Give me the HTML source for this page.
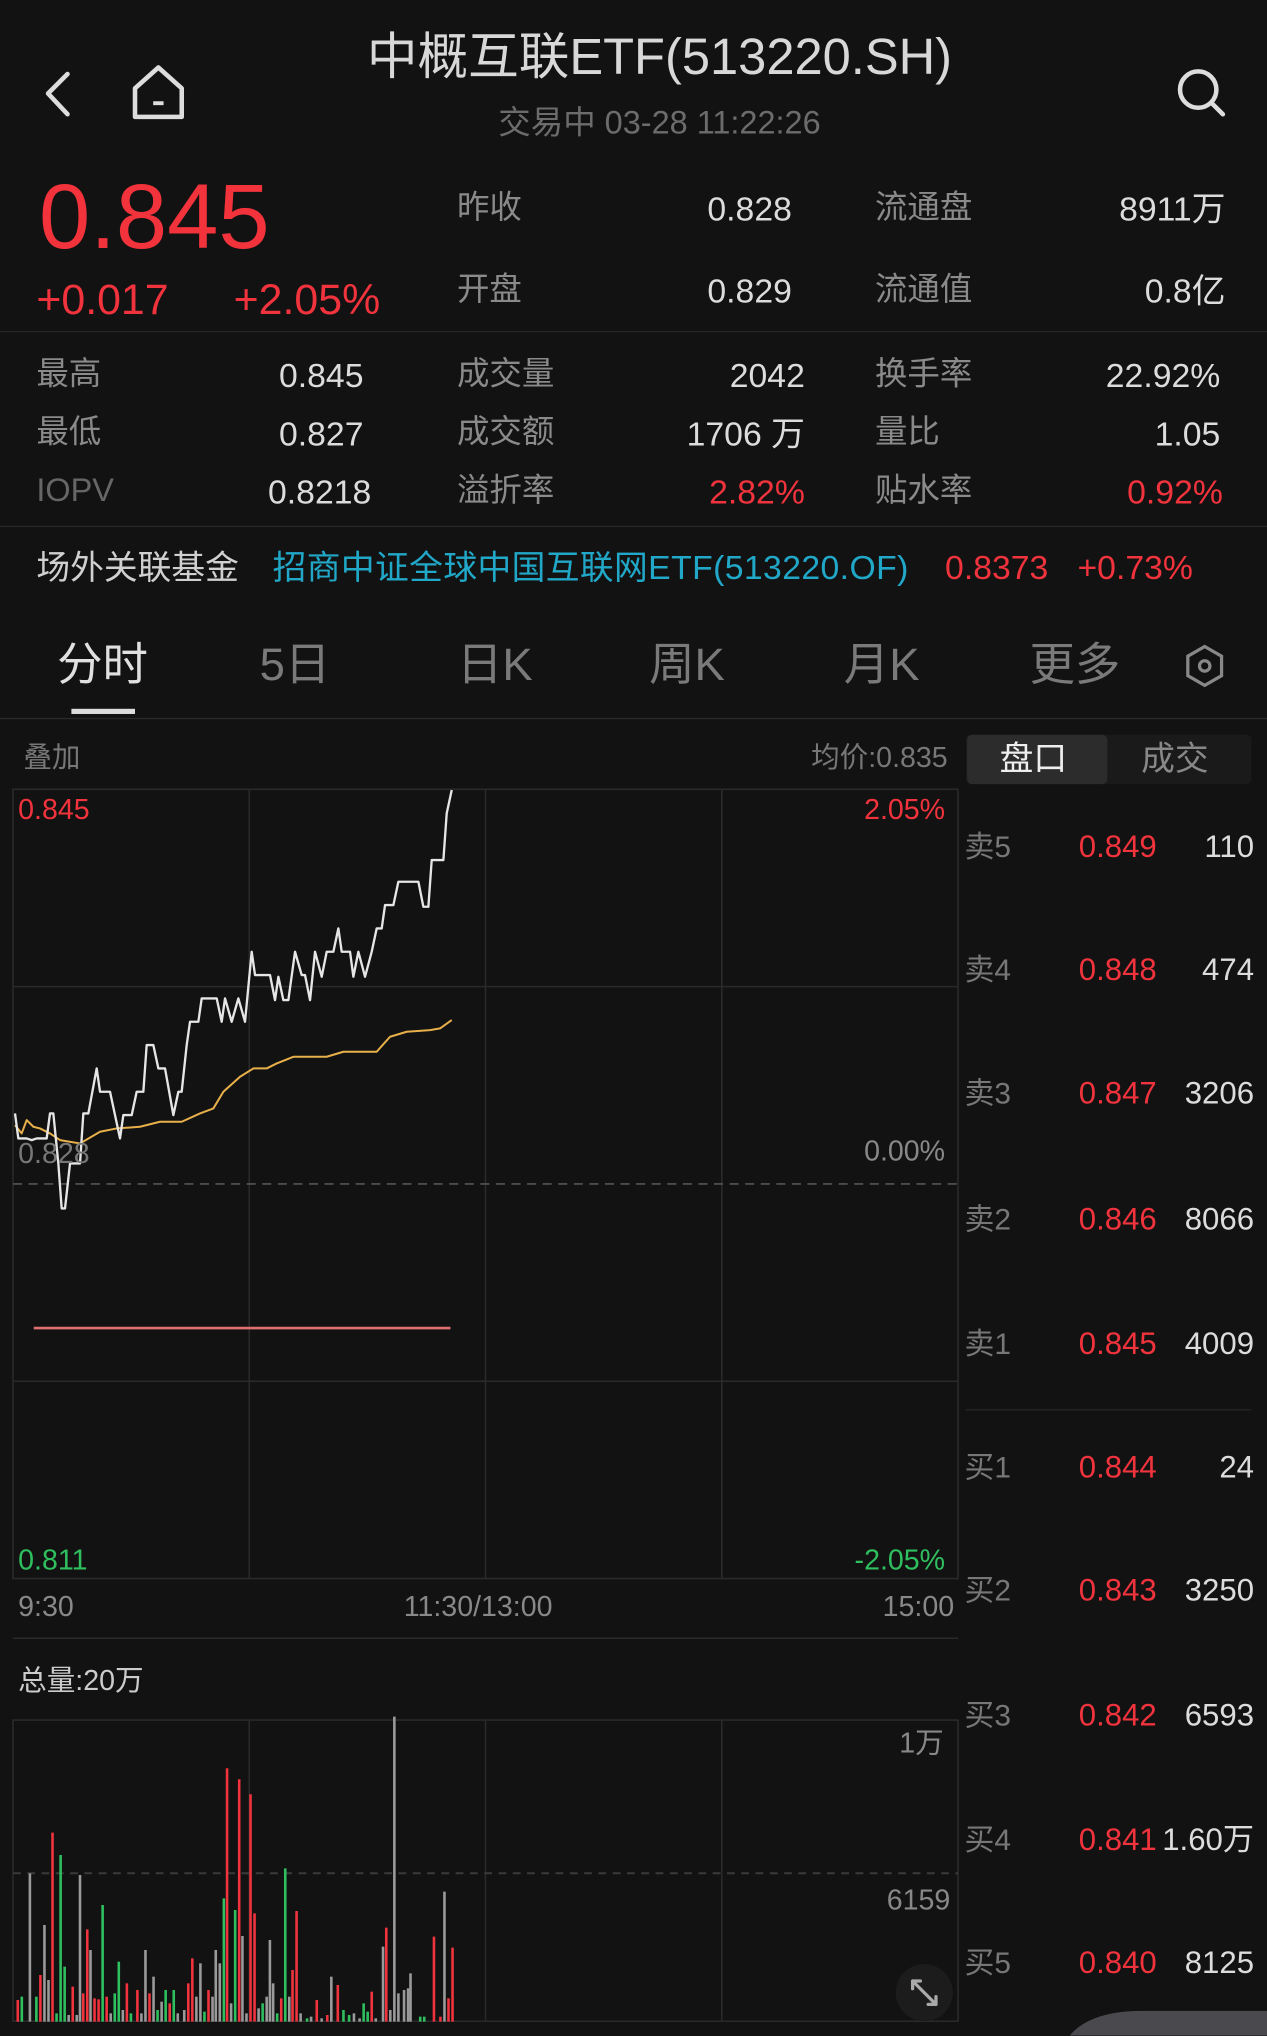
<!DOCTYPE html>
<html><head><meta charset="utf-8"><style>
html,body{margin:0;padding:0;background:#121212;width:1267px;height:2036px;overflow:hidden}
#w{position:absolute;left:0;top:0;width:976px;height:1568px;transform:scale(1.29816);transform-origin:0 0;background:#121212;font-family:"Liberation Sans","Noto Sans CJK SC",sans-serif}
.t{position:absolute;white-space:nowrap;line-height:1}
.r{text-align:right}
.g{color:#8a8a8a}.w{color:#dcdcdc}.red{color:#f0333c}.gn{color:#2fbf5e}
.hl{position:absolute;height:1px;background:#262626}
</style></head><body><div id="w">
<svg style="position:absolute;left:0;top:0" width="976" height="120">
<path d="M52 57 L37 72 L52 88" fill="none" stroke="#ddd" stroke-width="3.5" stroke-linecap="round" stroke-linejoin="round"/>
<path d="M104 90 V68 L122 52 L140 68 V90 Z" fill="none" stroke="#ddd" stroke-width="3.5" stroke-linejoin="round"/>
<rect x="118" y="78" width="8" height="3" fill="#ddd"/>
<circle cx="923" cy="69" r="14" fill="none" stroke="#ddd" stroke-width="3.5"/>
<path d="M933 79 L942 88" stroke="#ddd" stroke-width="3.5" stroke-linecap="round"/>
</svg>
<div class="t w" style="left:0;width:1016px;text-align:center;top:25px;font-size:39px;color:#d8d8d8">中概互联ETF(513220.SH)</div>
<div class="t" style="left:0;width:1016px;text-align:center;top:83px;font-size:25px;color:#6c6c6c">交易中 03-28 11:22:26</div>

<div class="t red" style="left:30px;top:132px;font-size:71px;color:#f2333c">0.845</div>
<div class="t red" style="left:28px;top:214px;font-size:33px">+0.017</div>
<div class="t red" style="left:180px;top:214px;font-size:33px">+2.05%</div>
<div class="t g" style="left:352px;top:148px;font-size:25px">昨收</div>
<div class="t w r" style="right:366px;top:148px;font-size:26px">0.828</div>
<div class="t g" style="left:674px;top:148px;font-size:25px">流通盘</div>
<div class="t w r" style="right:32px;top:148px;font-size:26px">8911万</div>
<div class="t g" style="left:352px;top:211px;font-size:25px">开盘</div>
<div class="t w r" style="right:366px;top:211px;font-size:26px">0.829</div>
<div class="t g" style="left:674px;top:211px;font-size:25px">流通值</div>
<div class="t w r" style="right:32px;top:211px;font-size:26px">0.8亿</div>
<div class="hl" style="left:0;width:976px;top:255px"></div>

<div class="t g" style="left:28px;top:276px;font-size:25px">最高</div>
<div class="t w r" style="right:696px;top:276px;font-size:26px">0.845</div>
<div class="t g" style="left:352px;top:276px;font-size:25px">成交量</div>
<div class="t w r" style="right:356px;top:276px;font-size:26px">2042</div>
<div class="t g" style="left:674px;top:276px;font-size:25px">换手率</div>
<div class="t w r" style="right:36px;top:276px;font-size:26px">22.92%</div>
<div class="t g" style="left:28px;top:321px;font-size:25px">最低</div>
<div class="t w r" style="right:696px;top:321px;font-size:26px">0.827</div>
<div class="t g" style="left:352px;top:321px;font-size:25px">成交额</div>
<div class="t w r" style="right:356px;top:321px;font-size:26px">1706 万</div>
<div class="t g" style="left:674px;top:321px;font-size:25px">量比</div>
<div class="t w r" style="right:36px;top:321px;font-size:26px">1.05</div>
<div class="t g" style="left:28px;top:366px;font-size:25px;color:#666">IOPV</div>
<div class="t w r" style="right:690px;top:366px;font-size:26px">0.8218</div>
<div class="t g" style="left:352px;top:366px;font-size:25px">溢折率</div>
<div class="t red r" style="right:356px;top:366px;font-size:26px">2.82%</div>
<div class="t g" style="left:674px;top:366px;font-size:25px">贴水率</div>
<div class="t red r" style="right:34px;top:366px;font-size:26px">0.92%</div>
<div class="hl" style="left:0;width:976px;top:405px"></div>

<div class="t" style="left:28px;top:424px;font-size:26px;color:#d0d0d0">场外关联基金</div>
<div class="t" style="left:210px;top:424px;font-size:26px;color:#21a8c8;letter-spacing:0.3px">招商中证全球中国互联网ETF(513220.OF)</div>
<div class="t red" style="left:728px;top:424px;font-size:26px">0.8373</div>
<div class="t red" style="left:830px;top:424px;font-size:26px">+0.73%</div>

<div class="t" style="left:44px;top:495px;font-size:35px;color:#e0e0e0">分时</div>
<div style="position:absolute;left:55px;top:546px;width:49px;height:4px;background:#ddd"></div>
<div class="t g" style="left:200px;top:495px;font-size:35px;color:#7a7a7a">5日</div>
<div class="t g" style="left:352px;top:495px;font-size:35px;color:#7a7a7a">日K</div>
<div class="t g" style="left:500px;top:495px;font-size:35px;color:#7a7a7a">周K</div>
<div class="t g" style="left:650px;top:495px;font-size:35px;color:#7a7a7a">月K</div>
<div class="t g" style="left:793px;top:495px;font-size:35px;color:#7a7a7a">更多</div>
<svg style="position:absolute;left:910px;top:495px" width="36" height="36"><path d="M18 3 L31 10.5 V25.5 L18 33 L5 25.5 V10.5 Z" fill="none" stroke="#888" stroke-width="2.5"/><circle cx="18" cy="18" r="4" fill="none" stroke="#888" stroke-width="2.5"/></svg>
<div class="hl" style="left:0;width:976px;top:553px;background:#2a2a2a"></div>

<div class="t g" style="left:18px;top:573px;font-size:22px;color:#777">叠加</div>
<div class="t r" style="right:246px;top:573px;font-size:22px;color:#777">均价:0.835</div>
<div style="position:absolute;left:744px;top:566px;width:220px;height:38px;background:#1a1a1a;border-radius:4px"></div>
<div style="position:absolute;left:745px;top:566px;width:108px;height:38px;background:#2c2c2c;border-radius:4px"></div>
<div class="t" style="left:770px;top:571px;font-size:26px;color:#eee">盘口</div>
<div class="t" style="left:879px;top:571px;font-size:26px;color:#888">成交</div>

<svg style="position:absolute;left:0;top:0" width="976" height="1568">
<g stroke="#2a2a2a" stroke-width="1.2" fill="none">
<rect x="10" y="608" width="728" height="608"/>
<line x1="10" y1="760" x2="738" y2="760"/><line x1="10" y1="1064" x2="738" y2="1064"/>
<line x1="192" y1="608" x2="192" y2="1216"/><line x1="374" y1="608" x2="374" y2="1216"/><line x1="556" y1="608" x2="556" y2="1216"/>
<rect x="10" y="1325" width="728" height="232"/>
<line x1="192" y1="1325" x2="192" y2="1557"/><line x1="374" y1="1325" x2="374" y2="1557"/><line x1="556" y1="1325" x2="556" y2="1557"/>
<line x1="10" y1="1262" x2="738" y2="1262"/>
</g>
<line x1="10" y1="912" x2="738" y2="912" stroke="#555" stroke-width="1.3" stroke-dasharray="7,5"/>
<line x1="10" y1="1443" x2="738" y2="1443" stroke="#3a3a3a" stroke-width="1.5" stroke-dasharray="6,5"/>
<line x1="744" y1="1086" x2="964" y2="1086" stroke="#262626" stroke-width="1"/>
<line x1="26" y1="1023" x2="347" y2="1023" stroke="#e07070" stroke-width="2"/>
<g transform="translate(0,600.9) scale(0.2568)" fill="none" stroke-linejoin="round">
<polyline stroke="#e8b04a" stroke-width="6" points="45,1035 65,1060 80,1020 100,1040 120,1045 150,1060 180,1080 240,1090 300,1055 350,1045 420,1040 480,1025 545,1025 600,1000 640,985 670,935 720,890 760,865 800,865 830,850 880,830 980,830 1030,815 1130,815 1170,770 1220,755 1290,750 1320,745 1355,720"/>
<polyline stroke="#e6e6e6" stroke-width="7" points="45,1000 55,1075 80,1075 95,1080 110,1075 140,1075 150,1000 160,1000 175,1150 185,1285 195,1285 210,1150 240,1150 250,1000 265,1000 290,865 300,935 330,935 360,1075 370,1005 395,1005 410,935 430,935 440,795 460,795 475,865 495,865 520,1005 535,935 545,935 560,795 570,725 595,725 605,655 650,655 665,725 675,655 695,725 715,655 735,725 755,515 765,585 810,585 825,660 835,590 850,660 865,660 885,515 905,585 915,585 930,660 945,515 965,590 980,515 1000,515 1015,445 1025,515 1050,515 1060,590 1075,515 1095,590 1115,515 1130,445 1145,445 1155,375 1180,375 1195,305 1255,305 1270,380 1285,380 1295,240 1330,240 1340,100 1355,30"/>
</g>
<g id="vb" transform="translate(0,1271) scale(0.6225,0.2568)" stroke-width="3.2"></g>
<circle cx="712" cy="1535" r="22" fill="#1c1c1c"/>
<path d="M703 1526 L721 1544 M703 1526 h6 M703 1526 v6 M721 1544 h-6 M721 1544 v-6" stroke="#aaa" stroke-width="2.5" fill="none" stroke-linecap="round"/>
<path d="M824 1568 Q840 1549 880 1549 H976 V1568 Z" fill="#4a4a4e"/>
</svg>
<div class="t red" style="left:14px;top:613px;font-size:22px">0.845</div>
<div class="t red r" style="right:248px;top:613px;font-size:22px">2.05%</div>
<div class="t" style="left:14px;top:878px;font-size:22px;color:#777">0.828</div>
<div class="t r" style="right:248px;top:876px;font-size:22px;color:#888">0.00%</div>
<div class="t gn" style="left:14px;top:1191px;font-size:22px">0.811</div>
<div class="t gn r" style="right:248px;top:1191px;font-size:22px">-2.05%</div>
<div class="t" style="left:14px;top:1227px;font-size:22px;color:#888">9:30</div>
<div class="t" style="left:311px;top:1227px;font-size:22px;color:#888">11:30/13:00</div>
<div class="t r" style="right:241px;top:1227px;font-size:22px;color:#888">15:00</div>
<div class="t" style="left:14px;top:1284px;font-size:22px;color:#ccc">总量:20万</div>
<div class="t r" style="right:249px;top:1332px;font-size:22px;color:#888">1万</div>
<div class="t r" style="right:244px;top:1453px;font-size:22px;color:#888">6159</div>

<div id="ob"></div>
<script>
var rows=[["卖5","0.849","110",653],["卖4","0.848","474",748],["卖3","0.847","3206",843],["卖2","0.846","8066",940],["卖1","0.845","4009",1036],["买1","0.844","24",1131],["买2","0.843","3250",1226],["买3","0.842","6593",1322],["买4","0.841","1.60万",1418],["买5","0.840","8125",1513]];
var h="";rows.forEach(function(r){var t=r[3]-12;h+='<div class="t" style="left:743px;top:'+t+'px;font-size:23px;color:#777">'+r[0]+'</div><div class="t red" style="left:831px;top:'+t+'px;font-size:24px">'+r[1]+'</div><div class="t w r" style="right:10px;top:'+t+'px;font-size:24px">'+r[2]+'</div>';});
document.getElementById("ob").innerHTML=h;
var b="22,1050,r 27,1040,n 37,670,g 45,1040,n 50,975,r 55,825,g 60,990,g 65,548,r 70,1090,n 75,615,n 80,950,n 85,1095,g 90,1010,r 95,1095,g 99,675,g 103,1030,r 108,838,r 112,900,g 117,1045,r 122,1048,r 127,765,n 132,1040,r 137,1090,g 142,1030,n 147,935,n 152,1080,g 157,1000,r 162,1090,n 170,1020,r 175,1090,g 180,900,g 185,1030,r 190,980,g 195,1080,n 200,1055,g 205,1020,n 210,1060,r 215,1020,n 220,1090,g 228,1080,g 233,1000,r 238,925,r 243,1040,g 248,940,g 253,1085,n 258,1020,r 263,1040,g 267,900,g 272,940,g 277,745,n 281,355,r 286,1060,g 291,780,n 296,388,r 300,858,g 305,1090,g 310,433,r 315,790,r 320,1075,g 325,1060,n 330,1040,g 334,870,g 338,1000,g 343,1090,n 348,1045,r 353,655,n 358,1040,g 362,960,r 367,783,r 372,1090,g 380,1105,n 385,1100,g 392,1050,r 398,1105,g 405,1095,r 410,980,g 418,1005,r 425,1080,n 432,1095,n 438,1090,g 445,1105,g 450,1060,n 455,1085,n 460,1025,r 465,1105,g 474,890,g 478,833,r 483,1080,g 488,200,g 493,1030,g 500,1020,g 505,1015,g 508,970,g 520,1100,n 525,1100,n 537,860,r 545,1100,r 550,725,g 555,1045,r 560,893,r".split(" ");
var c={r:"#f0333c",n:"#2fbf5e",g:"#9a9a9a"},s="";
b.forEach(function(e){var p=e.split(",");s+='<line x1="'+p[0]+'" x2="'+p[0]+'" y1="'+p[1]+'" y2="1115" stroke="'+c[p[2]]+'"/>';});
document.getElementById("vb").innerHTML=s;
</script>
</div></body></html>
